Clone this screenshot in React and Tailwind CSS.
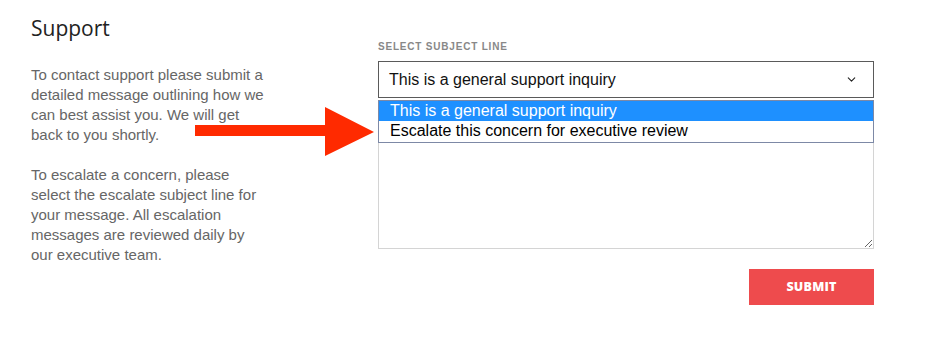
import { ChevronDown } from "lucide-react";

export default function App() {
    return (
        <div className="relative w-[926px] h-[352px] bg-white overflow-hidden" style={{ fontFamily: '"Liberation Sans", Arial, sans-serif' }}>
            <div className="flex pl-[31px] pt-[14px]">
                {/* left column */}
                <div className="w-[347px] shrink-0">
                    <h1 className="text-[21px] leading-[28px] text-[#222] font-normal" style={{ fontFamily: '"Open Sans", sans-serif' }}>
                        Support
                    </h1>
                    <p className="mt-[23px] w-[236px] text-[15px] leading-[20px] text-[#666]">
                        To contact support please submit a detailed message outlining how we can best assist you. We will get back to you shortly.
                    </p>
                    <p className="mt-[20px] w-[236px] text-[15px] leading-[20px] text-[#666]">
                        To escalate a concern, please select the escalate subject line for your message. All escalation messages are reviewed daily by our executive team.
                    </p>
                </div>

                {/* right column */}
                <div className="w-[496px] pt-[26px]">
                    <label className="block text-[10px] leading-[14px] font-bold tracking-[0.8px] text-[#888] uppercase">
                        Select subject line
                    </label>
                    <div className="relative mt-[7px]">
                        <div className="flex items-center justify-between h-[37px] border border-[#5a5a5a] pl-[10px] pr-[15px] text-[16px] text-[#111]">
                            <span>This is a general support inquiry</span>
                            <ChevronDown size={13} strokeWidth={2} className="text-[#222]" />
                        </div>
                        <textarea className="block mt-[10px] w-full h-[141px] border border-[#d4d4d4] outline-none" />

                        {/* open dropdown list */}
                        <div className="absolute left-0 top-[39px] w-full border border-[#7d89a6] bg-white text-[16px] leading-[20px]">
                            <div className="bg-[#1e90ff] text-white pl-[11px] h-[20px]">This is a general support inquiry</div>
                            <div className="text-black pl-[11px] h-[21px]">Escalate this concern for executive review</div>
                        </div>
                    </div>
                    <div className="flex justify-end mt-[20px]">
                        <button className="w-[125px] h-[36px] bg-[#ee4b4d] text-white text-[12.5px] font-extrabold tracking-[0.2px]" style={{ fontFamily: '"Open Sans", sans-serif' }}>
                            SUBMIT
                        </button>
                    </div>
                </div>
            </div>

            {/* red arrow annotation */}
            <svg className="absolute left-[195px] top-[107px]" width="180" height="50" viewBox="0 0 180 50">
                <polygon points="0,18 130,18 130,0 179,25 130,49 130,29 0,29" fill="#ff2a00" />
            </svg>
        </div>
    );
}
